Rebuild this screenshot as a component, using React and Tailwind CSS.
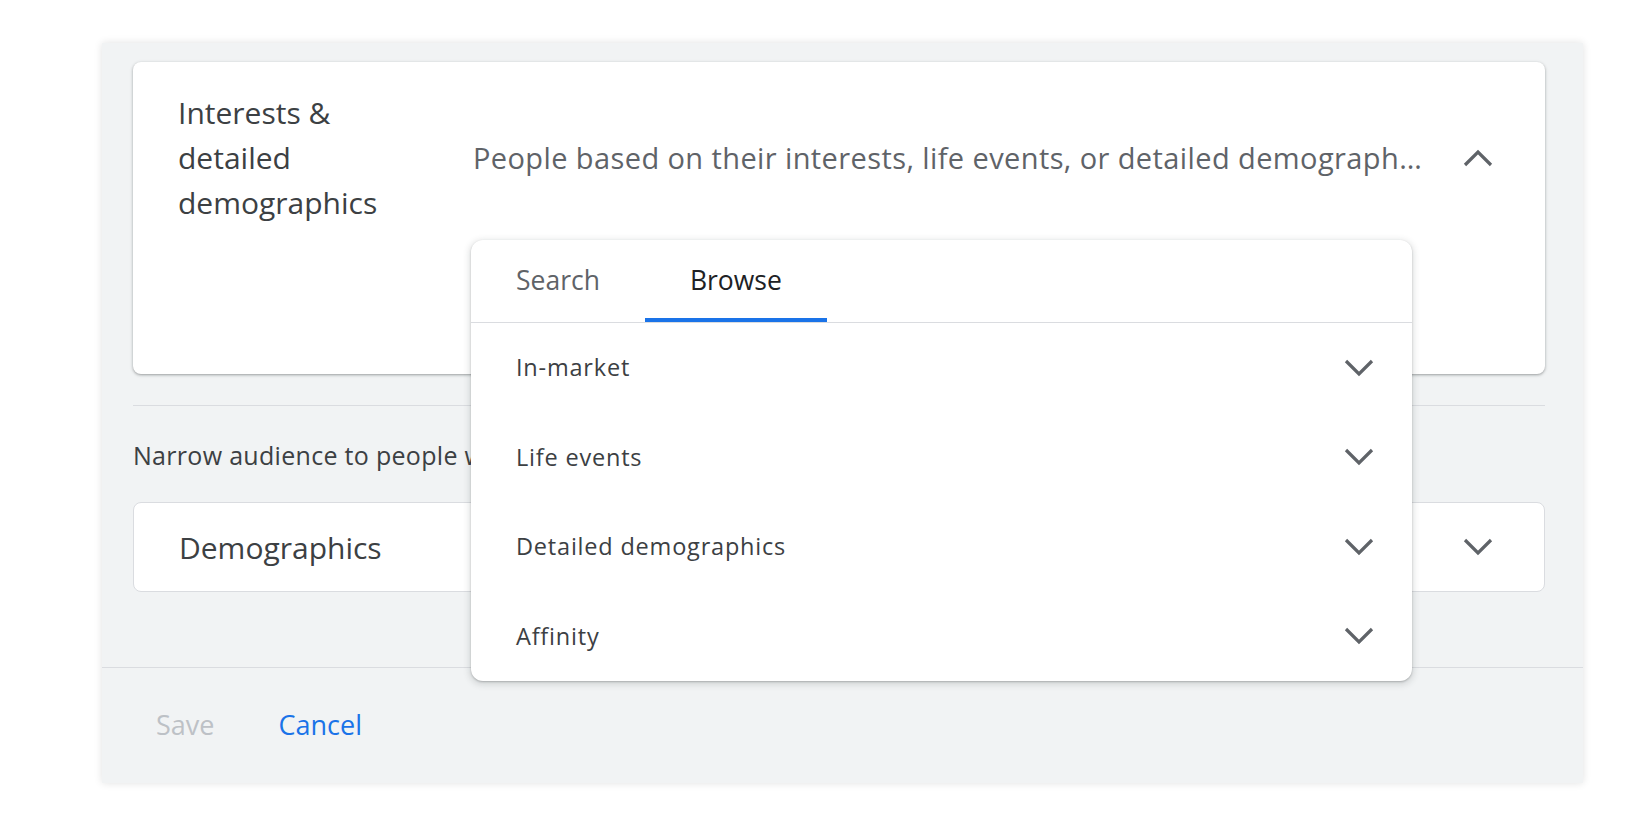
import React from 'react'

const Chevron = ({ up = false, className = '' }) => (
  <svg
    width="30"
    height="18"
    viewBox="0 0 30 18"
    className={className}
    fill="none"
    stroke="#5f6368"
    strokeWidth="3.2"
    strokeLinecap="butt"
    strokeLinejoin="miter"
  >
    {up ? <polyline points="2,16 15,3 28,16" /> : <polyline points="2,2 15,15 28,2" />}
  </svg>
)

const categories = ['In-market', 'Life events', 'Detailed demographics', 'Affinity']

function BrowsePopup() {
  return (
    <div className="absolute left-[369px] top-[197px] w-[941px] h-[441px] rounded-[12px] bg-white shadow-[0_2px_6px_2px_rgba(60,64,67,0.15),0_1px_2px_rgba(60,64,67,0.3)] overflow-hidden">
      <div className="flex h-[83px] border-b border-[#dadce0]">
        <div className="relative flex items-center px-[45px] text-[26.5px] text-[#5f6368] font-['Open_Sans',sans-serif]">
          Search
        </div>
        <div className="relative flex items-center px-[45px] text-[26.5px] text-[#202124] font-['Open_Sans',sans-serif]">
          Browse
          <div className="absolute left-0 right-0 bottom-0 h-[4px] bg-[#1a73e8]" />
        </div>
      </div>
      {categories.map((c) => (
        <div key={c} className="flex items-center justify-between h-[89.5px] pl-[45px] pr-[38px]">
          <span className="text-[23.5px] tracking-[0.8px] text-[#3c4043] font-['Open_Sans',sans-serif]">{c}</span>
          <Chevron />
        </div>
      ))}
    </div>
  )
}

export default function App() {
  return (
    <div className="min-h-screen bg-white pt-[43px] pl-[102px] font-['Roboto',sans-serif]">
      <div className="relative w-[1481px] h-[740px] bg-[#f1f3f4] shadow-[0_0_8px_rgba(0,0,0,0.12)] flex flex-col">
        <div className="pt-[19px] pl-[31px] pr-[38px]">
          <div className="h-[312px] bg-white rounded-[8px] shadow-[0_1px_2px_rgba(60,64,67,0.3),0_1px_3px_1px_rgba(60,64,67,0.15)] pt-[28px] pl-[45px] pr-[52px]">
            <div className="flex items-center">
              <div className="w-[295px] shrink-0">
                <div className="w-[250px] text-[30px] leading-[45px] text-[#3c4043] font-['Open_Sans',sans-serif]">
                  Interests &amp; detailed demographics
                </div>
              </div>
              <div className="flex-1 text-[29px] tracking-[0.4px] text-[#5f6368] whitespace-nowrap font-['Open_Sans',sans-serif]">
                People based on their interests, life events, or detailed demograph…
              </div>
              <Chevron up />
            </div>
          </div>

          <div className="mt-[31px] h-px bg-[#dadce0]" />

          <div className="mt-[33px] text-[25px] tracking-[0.3px] leading-[32px] text-[#3c4043] font-['Open_Sans',sans-serif]">
            Narrow audience to people who meet these criteria
          </div>

          <div className="mt-[31px] h-[90px] bg-white rounded-[8px] border border-[#dadce0] flex items-center justify-between pl-[45px] pr-[51px]">
            <span className="text-[30px] text-[#3c4043] font-['Open_Sans',sans-serif]">Demographics</span>
            <Chevron />
          </div>
        </div>

        <div className="mt-auto h-[116px] border-t border-[#dadce0] flex items-center pl-[54px] gap-[64px]">
          <button className="text-[27px] font-medium text-[#bdc1c6] font-['Open_Sans',sans-serif]">Save</button>
          <button className="text-[27px] font-medium text-[#1a73e8] font-['Open_Sans',sans-serif]">Cancel</button>
        </div>

        <BrowsePopup />
      </div>
    </div>
  )
}
